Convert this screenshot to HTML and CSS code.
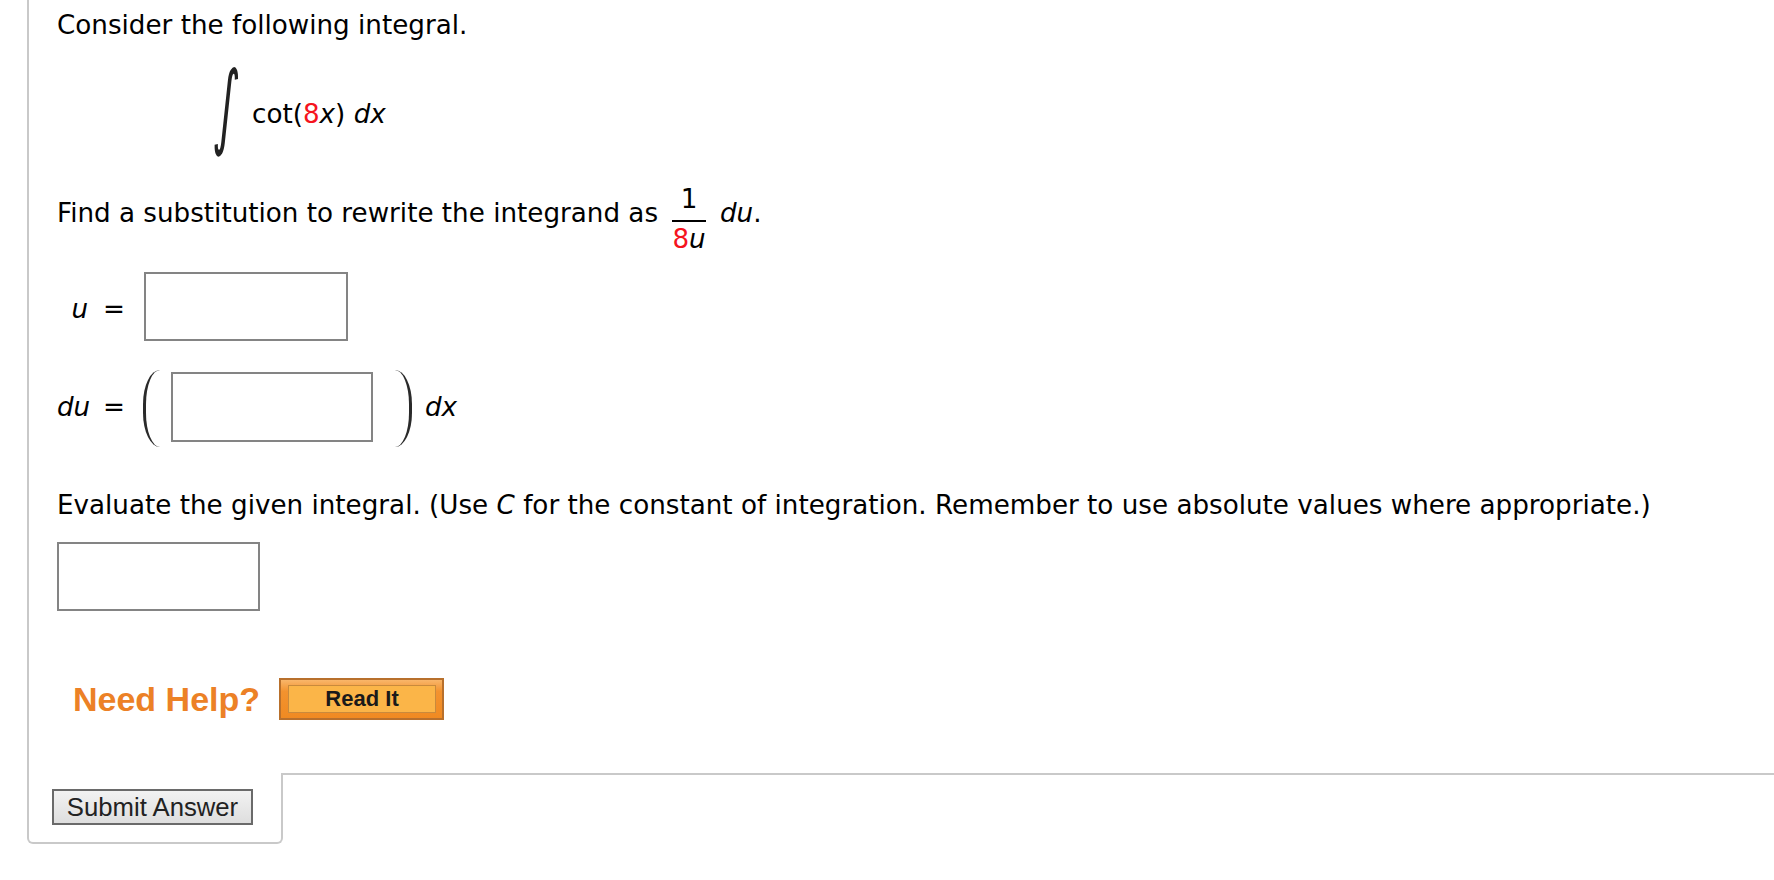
FILE: index.html
```html
<!DOCTYPE html>
<html lang="en">
<head>
<meta charset="utf-8">
<title>Integral</title>
<link rel="stylesheet" href="styles.css">
</head>
<body>
<div class="panel">
  <div class="content">
    <p class="line first">Consider the following integral.</p>
    <div class="integral-row">
      <span class="int-sign">∫</span>
      <span class="integrand">cot(<span class="red">8</span><i>x</i>) <i>dx</i></span>
    </div>
    <p class="line find">Find a substitution to rewrite the integrand as <span class="frac"><span class="num">1</span><span class="bar"></span><span class="den"><span class="red">8</span><i>u</i></span></span> <i>du</i>.</p>
    <div class="eq-row u-row">
      <span class="lab"><i>u</i></span>
      <span class="eq">=</span>
      <span class="box u-box"></span>
    </div>
    <div class="eq-row du-row">
      <span class="lab"><i>du</i></span>
      <span class="eq">=</span>
      <span class="paren left"></span>
      <span class="box du-box"></span>
      <span class="paren right"></span>
      <span class="dx"><i>dx</i></span>
    </div>
    <p class="line evaluate">Evaluate the given integral. (Use <i>C</i> for the constant of integration. Remember to use absolute values where appropriate.)</p>
    <span class="box ans-box"></span>
    <div class="help-row">
      <span class="need-help">Need Help?</span>
      <span class="read-it"><span class="read-inner">Read It</span></span>
    </div>
  </div>
  <div class="footer">
    <div class="submit-cell"><button class="submit" type="button">Submit Answer</button></div>
    <div class="footer-rest"></div>
  </div>
</div>
</body>
</html>
```
FILE: styles.css
```css
html, body {
  margin: 0;
  padding: 0;
  background: #ffffff;
}
body {
  font-family: "DejaVu Sans", Verdana, sans-serif;
  font-size: 26.2px;
  color: #000;
  width: 1774px;
  height: 880px;
  overflow: hidden;
}
i {
  font-style: oblique;
}
.red {
  color: #f5141e;
}
.panel {
  margin-left: 27px;
}
.content {
  border-left: 2px solid #c9c9c9;
  padding-left: 28px;
  padding-top: 9px;
  display: flex;
  flex-direction: column;
  align-items: flex-start;
}
.line {
  margin: 0;
  line-height: 32px;
  white-space: nowrap;
}
.integral-row {
  margin-top: 33px;
  margin-left: 155px;
  display: flex;
  align-items: flex-start;
  height: 73px;
}
.int-sign {
  display: block;
  width: 30px;
  height: 73px;
  line-height: 73px;
  font-family: "DejaVu Sans", sans-serif;
  font-size: 44px;
  text-align: center;
  color: #222;
  transform: translateY(-6px) scale(1, 2.1) skewX(-10deg);
  transform-origin: 50% 50%;
}
.integrand {
  margin-left: 10px;
  margin-top: 24px;
  line-height: 32px;
  white-space: nowrap;
}
.find {
  margin-top: 39px;
}
.frac {
  display: inline-flex;
  flex-direction: column;
  align-items: center;
  vertical-align: 14px;
  padding: 0 6px;
}
.frac .num {
  line-height: 26px;
}
.frac .den {
  line-height: 26px;
  margin-top: 4px;
}
.frac .bar {
  display: block;
  align-self: stretch;
  height: 2px;
  margin-top: 8px;
  background: #000;
}
.eq-row {
  display: flex;
  align-items: flex-start;
}
.u-row {
  margin-top: 20px;
}
.du-row {
  margin-top: 29px;
}
.lab {
  width: 31px;
  text-align: right;
  line-height: 32px;
  margin-top: 21px;
  white-space: nowrap;
}
.eq {
  margin-left: 15px;
  line-height: 32px;
  margin-top: 21px;
}
.box {
  display: block;
  box-sizing: border-box;
  border: 2px solid #848484;
  background: #fff;
}
.u-box {
  width: 204px;
  height: 69px;
  margin-left: 19px;
}
.paren {
  display: block;
  box-sizing: border-box;
  width: 17px;
  height: 77px;
}
.paren.left {
  margin-left: 18px;
  border-left: 3px solid #2a2a2a;
  border-top-left-radius: 17px 34px;
  border-bottom-left-radius: 17px 34px;
}
.paren.right {
  margin-left: 22px;
  border-right: 3px solid #2a2a2a;
  border-top-right-radius: 17px 34px;
  border-bottom-right-radius: 17px 34px;
}
.du-box {
  width: 202px;
  height: 70px;
  margin-top: 2px;
  margin-left: 11px;
}
.dx {
  margin-left: 13px;
  margin-top: 21px;
  line-height: 32px;
}
.evaluate {
  margin-top: 42px;
}
.ans-box {
  width: 203px;
  height: 69px;
  margin-top: 21px;
}
.help-row {
  margin-top: 67px;
  margin-bottom: 53px;
  display: flex;
  align-items: center;
  height: 42px;
}
.need-help {
  margin-left: 16px;
  font-family: "Liberation Sans", Arial, sans-serif;
  font-weight: bold;
  font-size: 34px;
  line-height: 42px;
  color: #ec8126;
}
.read-it {
  display: flex;
  box-sizing: border-box;
  margin-left: 19px;
  width: 165px;
  height: 42px;
  padding: 5px 6px 5px 7px;
  border: 2px solid #b8702c;
  background: linear-gradient(#f9b66a, #f3932f 30%, #f08a22);
}
.read-inner {
  flex: 1;
  display: flex;
  align-items: center;
  justify-content: center;
  border: 1px solid #c98a3c;
  background: #fbb548;
  font-family: "Liberation Sans", Arial, sans-serif;
  font-weight: bold;
  font-size: 22px;
  color: #1a1a1a;
}
.footer {
  display: flex;
}
.submit-cell {
  box-sizing: border-box;
  width: 256px;
  height: 71px;
  padding: 16px 0 0 23px;
  border-left: 2px solid #c9c9c9;
  border-right: 2px solid #c9c9c9;
  border-bottom: 2px solid #c9c9c9;
  border-bottom-left-radius: 6px;
  border-bottom-right-radius: 6px;
}
.submit {
  box-sizing: border-box;
  width: 201px;
  height: 36px;
  padding: 0;
  margin: 0;
  border: 2px solid #6a6a6a;
  background: linear-gradient(#f2f2f2, #dedede);
  font-family: "Liberation Sans", Arial, sans-serif;
  font-size: 25.7px;
  line-height: 32px;
  color: #222;
  border-radius: 0;
}
.footer-rest {
  flex: 1;
  border-top: 2px solid #c9c9c9;
}
```
